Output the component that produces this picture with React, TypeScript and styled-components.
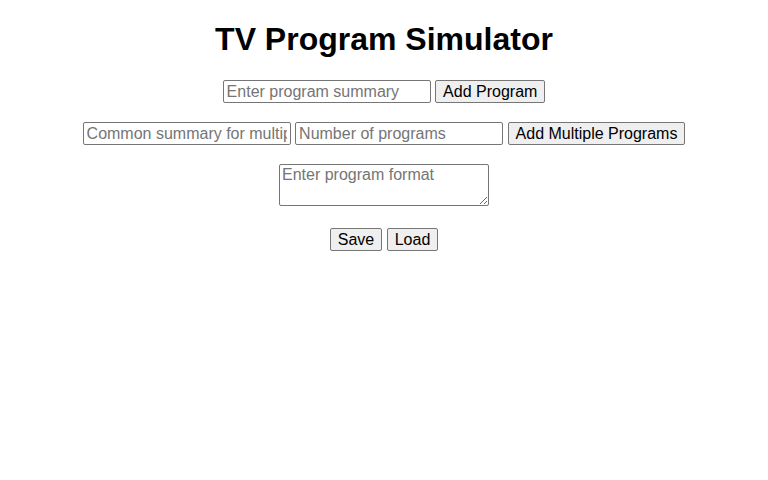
import React from "react";
import styled, { createGlobalStyle } from "styled-components";

const Global = createGlobalStyle`
  html, body { margin: 0; padding: 0; background: #ffffff; }
  body { font-family: "Liberation Sans", Arial, sans-serif; color: #000; }
  * { box-sizing: border-box; }
`;

const Page = styled.main`
  display: flex;
  flex-direction: column;
  align-items: center;
  padding-top: 21px;
`;

const Title = styled.h1`
  margin: 0 0 22px;
  font-size: 32px;
  font-weight: 700;
  line-height: 37px;
`;

const Row = styled.div<{ $gap?: number; $mb?: number }>`
  display: flex;
  justify-content: center;
  align-items: center;
  gap: ${(p) => p.$gap ?? 4.5}px;
  margin-bottom: ${(p) => p.$mb ?? 19}px;
`;

const TextInput = styled.input`
  width: 208px;
  height: 23px;
  padding: 1px 3px;
  border: 1px solid #767676;
  border-radius: 2px;
  font-family: "Liberation Sans", Arial, sans-serif;
  font-size: 16px;
  color: #000;
  background: #fff;
  &::placeholder { color: #757575; }
`;

const Button = styled.button`
  height: 23px;
  padding: 1px 7px;
  border: 1px solid #767676;
  border-radius: 2px;
  background: #efefef;
  font-family: "Liberation Sans", Arial, sans-serif;
  font-size: 16px;
  color: #000;
  line-height: 19px;
`;

const Area = styled.textarea`
  width: 210px;
  height: 42px;
  padding: 1px 2px;
  border: 1px solid #767676;
  border-radius: 2px;
  font-family: "Liberation Sans", Arial, sans-serif;
  font-size: 16px;
  line-height: 18px;
  resize: both;
  &::placeholder { color: #757575; }
`;

export default function App() {
  return (
    <>
      <Global />
      <Page>
        <Title>TV Program Simulator</Title>
        <Row>
          <TextInput placeholder="Enter program summary" />
          <Button>Add Program</Button>
        </Row>
        <Row>
          <TextInput placeholder="Common summary for multiple programs" />
          <TextInput placeholder="Number of programs" />
          <Button>Add Multiple Programs</Button>
        </Row>
        <Row $mb={22}>
          <Area placeholder="Enter program format" />
        </Row>
        <Row>
          <Button>Save</Button>
          <Button>Load</Button>
        </Row>
      </Page>
    </>
  );
}
